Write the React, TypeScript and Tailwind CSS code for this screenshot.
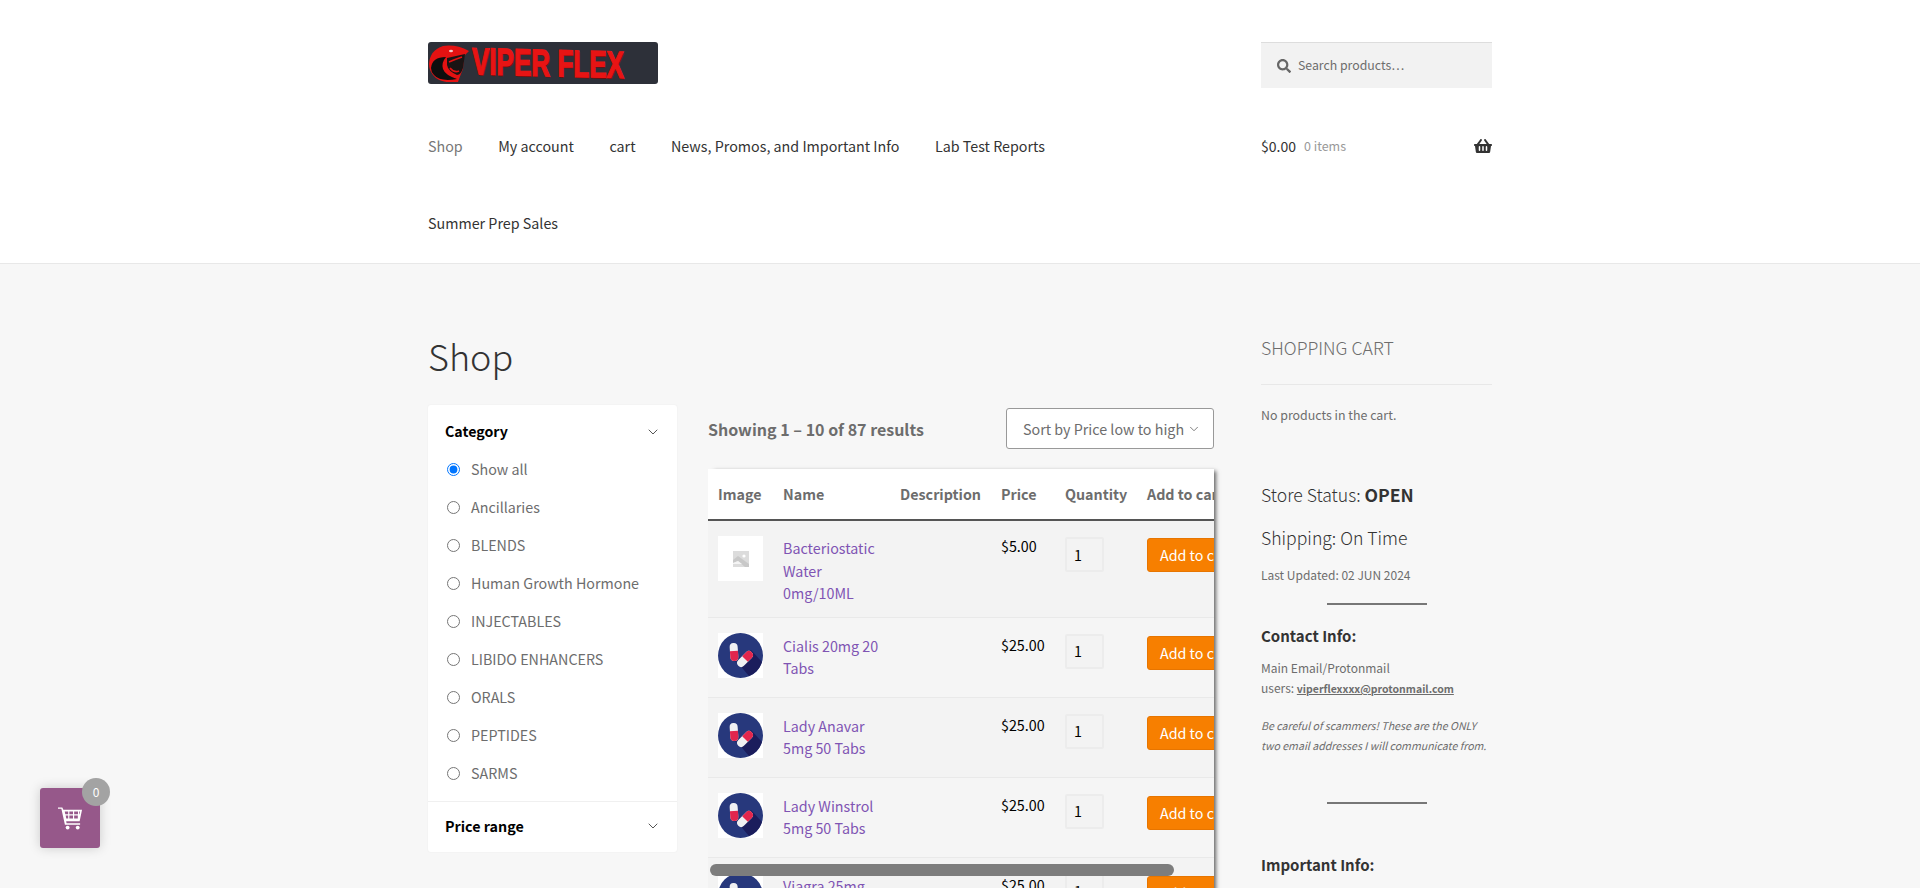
import { FaSearch, FaShoppingBasket } from "react-icons/fa";
import { ChevronDown } from "lucide-react";

const navItems = ["Shop", "My account", "cart", "News, Promos, and Important Info", "Lab Test Reports", "Summer Prep Sales"];

const categories = [
  "Show all",
  "Ancillaries",
  "BLENDS",
  "Human Growth Hormone",
  "INJECTABLES",
  "LIBIDO ENHANCERS",
  "ORALS",
  "PEPTIDES",
  "SARMS",
];

const products = [
  { name: "Bacteriostatic Water 0mg/10ML", price: "$5.00", placeholder: true },
  { name: "Cialis 20mg 20 Tabs", price: "$25.00" },
  { name: "Lady Anavar 5mg 50 Tabs", price: "$25.00" },
  { name: "Lady Winstrol 5mg 50 Tabs", price: "$25.00" },
  { name: "Viagra 25mg 100 Tabs", price: "$25.00" },
];

function Logo() {
  return (
    <div className="flex h-[42px] w-[230px] items-center overflow-hidden rounded-[3px] bg-[#2d3039]">
      <svg viewBox="0 0 42 38" className="h-[38px] w-[42px] shrink-0">
        <path d="M1 20 Q2 6 15 2 Q28 0 41 7 L36 12 L35 25 Q32 32 30 38 Q12 40 5 31 Q1 26 1 20 Z" fill="#e41212" />
        <path d="M3 24 Q4 13 18 13 Q13 19 15 25 Q17 31 29 35 Q12 38 6 31 Q3 28 3 24 Z" fill="#0e0e0e" />
        <path d="M19 14 L37 10 L35 24 Q33 31 29 31 Q20 27 19 21 Z" fill="#1a1414" />
        <path d="M21 18 Q28 15 34 13 M22 24 Q26 29 31 27" stroke="#e41212" strokeWidth="1.6" fill="none" />
        <ellipse cx="23" cy="7" rx="2" ry="1.2" fill="#f3c6c6" />
      </svg>
      <span className="ml-[2px] shrink-0 origin-left -translate-y-[1px] skew-y-[1deg] scale-x-[0.93] scale-y-[1.35] whitespace-nowrap font-['Liberation_Sans',sans-serif] text-[28px] leading-none font-bold text-[#e81414] [-webkit-text-stroke:1px_#e81414] [text-shadow:1px_1px_0_#6d0b0b]">
        VIPER FLEX
      </span>
    </div>
  );
}

function PillIcon() {
  return (
    <svg viewBox="0 0 45 45" className="h-[45px] w-[45px]">
      <rect width="45" height="45" fill="#fff" />
      <circle cx="22.5" cy="22.5" r="22.5" fill="#27387c" />
      <path d="M20 30 L33 17 L44 29 A22.5 22.5 0 0 1 31 43 Z" fill="#1b1d5c" />
      <path d="M13 24 L20 22 L27 31 L21 33 Z" fill="#1f2a6c" />
      <g transform="rotate(-4 16 19)">
        <rect x="12" y="10" width="8" height="18" rx="4" fill="#f0f0f2" />
        <path d="M12 18 H20 V24 A4 4 0 0 1 12 24 Z" fill="#e2264d" />
      </g>
      <g transform="rotate(45 27 26)">
        <rect x="23" y="16.5" width="8" height="19" rx="4" fill="#f0f0f2" />
        <path d="M23 26 V20.5 A4 4 0 0 1 31 20.5 V26 Z" fill="#e2264d" />
      </g>
    </svg>
  );
}

function PlaceholderIcon() {
  return (
    <div className="flex h-[45px] w-[45px] items-center justify-center bg-white">
      <svg viewBox="0 0 16 16" className="h-[16px] w-[16px]">
        <rect width="16" height="16" fill="#dcdcdc" />
        <circle cx="11" cy="5" r="1.6" fill="#fff" />
        <path d="M0 9 L5 5 L16 13 V16 H12 L5 10 L0 12 Z" fill="#c8c8c8" />
        <path d="M0 12 L5 10 L9 13 L0 13 Z" fill="#f4f4f4" />
      </svg>
    </div>
  );
}

function CartGlyph() {
  return (
    <svg viewBox="0 0 26 24" className="h-[24px] w-[25px]" fill="#fff">
      <path d="M0 1 H4.5 L5.6 3.5 H25 L22.5 15.5 H8.5 L8.9 17.5 H23 V19 H7.2 L3.5 2.5 H0 Z" />
      <path
        d="M7 5.2 H10.6 V8.2 H7.6 Z M11.8 5.2 H15.6 V8.2 H11.8 Z M16.8 5.2 H20.8 V8.2 H16.8 Z M22 5.2 H23 L22.4 8.2 H22 Z M8 9.4 H10.6 V12.4 H8.6 Z M11.8 9.4 H15.6 V12.4 H11.8 Z M16.8 9.4 H20.6 V12.4 H16.8 Z"
        fill="#96588a"
      />
      <circle cx="10" cy="22" r="2" />
      <circle cx="20.5" cy="22" r="2" />
    </svg>
  );
}

function FilterCard() {
  return (
    <aside className="h-[447px] w-[249px] shrink-0 rounded-[3px] bg-white pt-[14px] pr-[16px] pl-[17px] shadow-[0_0_2px_rgba(0,0,0,0.06)]">
      <div className="flex h-[26px] items-center justify-between">
        <span className="text-[14.2px] font-bold text-black">Category</span>
        <ChevronDown size={16} strokeWidth={1.5} className="text-[#555]" />
      </div>
      <div className="mt-[5px] flex flex-col">
        {categories.map((c, i) => (
          <label key={c} className="flex h-[38px] items-center gap-[11px] text-[14.3px] text-[#6d6d6d]">
            <input type="radio" name="category" defaultChecked={i === 0} className="ml-[2px] h-[13px] w-[13px]" />
            {c}
          </label>
        ))}
      </div>
      <div className="-mr-[16px] -ml-[17px] mt-[9px] border-t border-[#f0f0f0] pt-[11px] pr-[16px] pl-[17px]">
        <div className="flex h-[26px] items-center justify-between">
          <span className="text-[14.3px] font-bold text-black">Price range</span>
          <ChevronDown size={16} strokeWidth={1.5} className="text-[#555]" />
        </div>
      </div>
    </aside>
  );
}

function ProductTable() {
  return (
    <div className="relative mt-[21px] shadow-[4px_0_4px_-2px_rgba(0,0,0,0.6)]">
      <div className="h-[500px] overflow-hidden">
        <table className="w-[660px] table-fixed border-collapse text-left text-[14.3px]">
          <colgroup>
            <col className="w-[65px]" />
            <col className="w-[117px]" />
            <col className="w-[101px]" />
            <col className="w-[64px]" />
            <col className="w-[82px]" />
            <col />
          </colgroup>
          <thead className="bg-white text-[#6d6d6d]">
            <tr className="h-[51px] border-b-2 border-[#555]">
              <th className="pl-[10px] font-bold">Image</th>
              <th className="pl-[10px] font-bold">Name</th>
              <th className="pl-[10px] font-bold">Description</th>
              <th className="pl-[10px] font-bold">Price</th>
              <th className="pl-[10px] font-bold">Quantity</th>
              <th className="pl-[10px] font-bold">Add to cart</th>
            </tr>
          </thead>
          <tbody>
            {products.map((p, i) => (
              <tr key={p.name} className={`border-b border-[#e9e9e9] ${i % 2 === 0 ? "bg-[#f3f3f3]" : "bg-[#f5f5f5]"} ${p.placeholder ? "h-[97px]" : "h-[80px]"}`}>
                <td className="pt-[15px] pl-[10px] align-top">{p.placeholder ? <PlaceholderIcon /> : <PillIcon />}</td>
                <td className={`${p.placeholder ? "pt-[16px]" : "pt-[17px]"} pl-[10px] align-top leading-[22.6px] text-[#7f54b3]`}>{p.name}</td>
                <td />
                <td className={`${p.placeholder ? "pt-[14px]" : "pt-[16px]"} pl-[10px] align-top leading-[22.6px] text-black`}>{p.price}</td>
                <td className="pt-[16px] pl-[10px] align-top">
                  <div className="flex h-[35px] w-[39px] items-center rounded-[2px] border-2 border-[#ececec] bg-[#f3f3f3] pl-[7px] text-black">1</div>
                </td>
                <td className={`${p.placeholder ? "pt-[17px]" : "pt-[18px]"} pl-[10px] align-top`}>
                  <button className="flex h-[34px] w-[110px] items-center rounded-[3px] border border-[#e77500] bg-[#f77f00] pl-[12px] text-white">
                    Add to cart
                  </button>
                </td>
              </tr>
            ))}
          </tbody>
        </table>
      </div>
      {/* scrollbar thumb lies over the table */}
      <div className="absolute top-[395px] left-[2px] h-[12px] w-[464px] rounded-full bg-[#7d7d7d]" />
    </div>
  );
}

function Sidebar() {
  return (
    <aside className="w-[231px] shrink-0 pt-[71px] text-[#6d6d6d]">
      <h2 className="border-b border-[#e8e8e8] pb-[25px] text-[17.7px] leading-[24px] font-light text-[#6d6d6d]">SHOPPING CART</h2>
      <p className="mt-[19px] text-[12.4px] leading-[22px]">No products in the cart.</p>
      <p className="mt-[56px] text-[17.6px] leading-[26px] font-light text-[#333]">
        Store Status: <strong className="font-bold">OPEN</strong>
      </p>
      <p className="mt-[17px] text-[17.6px] leading-[26px] font-light text-[#333]">Shipping: On Time</p>
      <p className="mt-[14px] text-[12px] leading-[20px]">Last Updated: 02 JUN 2024</p>
      <hr className="mx-auto mt-[18px] h-[2px] w-[100px] border-0 bg-[#777]" />
      <h3 className="mt-[19px] text-[15px] leading-[24px] font-bold text-[#333]">Contact Info:</h3>
      <p className="mt-[10px] text-[12px] leading-[20px]">
        Main Email/Protonmail
        <br />
        users: <span className="text-[10.5px] font-bold underline">viperflexxxx@protonmail.com</span>
      </p>
      <p className="mt-[17px] text-[10.6px] leading-[20px] italic">
        Be careful of scammers! These are the ONLY two email addresses I will communicate from.
      </p>
      <hr className="mx-auto mt-[46px] h-[2px] w-[100px] border-0 bg-[#777]" />
      <h3 className="mt-[49px] text-[15px] leading-[24px] font-bold text-[#333]">Important Info:</h3>
    </aside>
  );
}

export default function App() {
  return (
    <div className="h-[888px] overflow-hidden bg-[#f7f7f7] font-['Noto_Sans_CJK_SC',sans-serif] text-[14.3px] text-[#6d6d6d]">
      <header className="border-b border-[#e8e8e8] bg-white pb-[2px]">
        <div className="mx-auto w-[1064px] pt-[42px]">
          <div className="flex justify-between">
            <Logo />
            <div className="flex h-[46px] w-[231px] items-center gap-[7px] border-t border-[#ddd] bg-[#f2f2f2] pl-[16px] text-[12.3px] text-[#6d6d6d]">
              <FaSearch size={14} className="text-[#666]" />
              Search products…
            </div>
          </div>
          <div className="mt-[19px] flex justify-between">
            <nav className="flex w-[700px] flex-wrap gap-x-[35.5px] text-[14.3px] text-[#333]">
              {navItems.map((n, i) => (
                <a key={n} className={`flex h-[77px] items-center ${i === 0 ? "text-[#777]" : ""}`}>
                  {n}
                </a>
              ))}
            </nav>
            <div className="flex h-[77px] w-[231px] items-center text-[14px] text-[#333]">
              <span className="pt-[1px]">$0.00</span>
              <span className="ml-[8px] pt-[1px] text-[12.5px] text-[#999]">0 items</span>
              <FaShoppingBasket size={18} className="ml-auto text-[#333]" />
            </div>
          </div>
        </div>
      </header>

      <main className="mx-auto flex w-[1064px] justify-between">
        <div className="w-[786px]">
          <h1 className="pt-[63px] text-[36px] leading-[56px] font-light text-[#333]">Shop</h1>
          <div className="mt-[22px] flex gap-[31px]">
            <FilterCard />
            <div className="w-[506px]">
              <div className="flex h-[43px] items-center justify-between pt-[4px]">
                <span className="text-[16px] font-bold text-[#6d6d6d]">Showing 1 – 10 of 87 results</span>
                <div className="flex h-[41px] w-[208px] items-center gap-[3px] rounded-[3px] border border-[#999] bg-white pl-[16px] whitespace-nowrap text-[#6d6d6d]">
                  Sort by Price low to high
                  <ChevronDown size={14} strokeWidth={1.5} />
                </div>
              </div>
              <ProductTable />
            </div>
          </div>
        </div>
        <Sidebar />
      </main>

      {/* floating cart sits over the page */}
      <div className="fixed top-[788px] left-[40px] flex h-[60px] w-[60px] items-center justify-center rounded-[3px] bg-[#96588a] shadow-[0_0_12px_rgba(0,0,0,0.18)]">
        <CartGlyph />
        <span className="absolute -top-[10px] -right-[10px] flex h-[28px] w-[28px] items-center justify-center rounded-full bg-[#a3a3a3] text-[12px] text-white">0</span>
      </div>
    </div>
  );
}
